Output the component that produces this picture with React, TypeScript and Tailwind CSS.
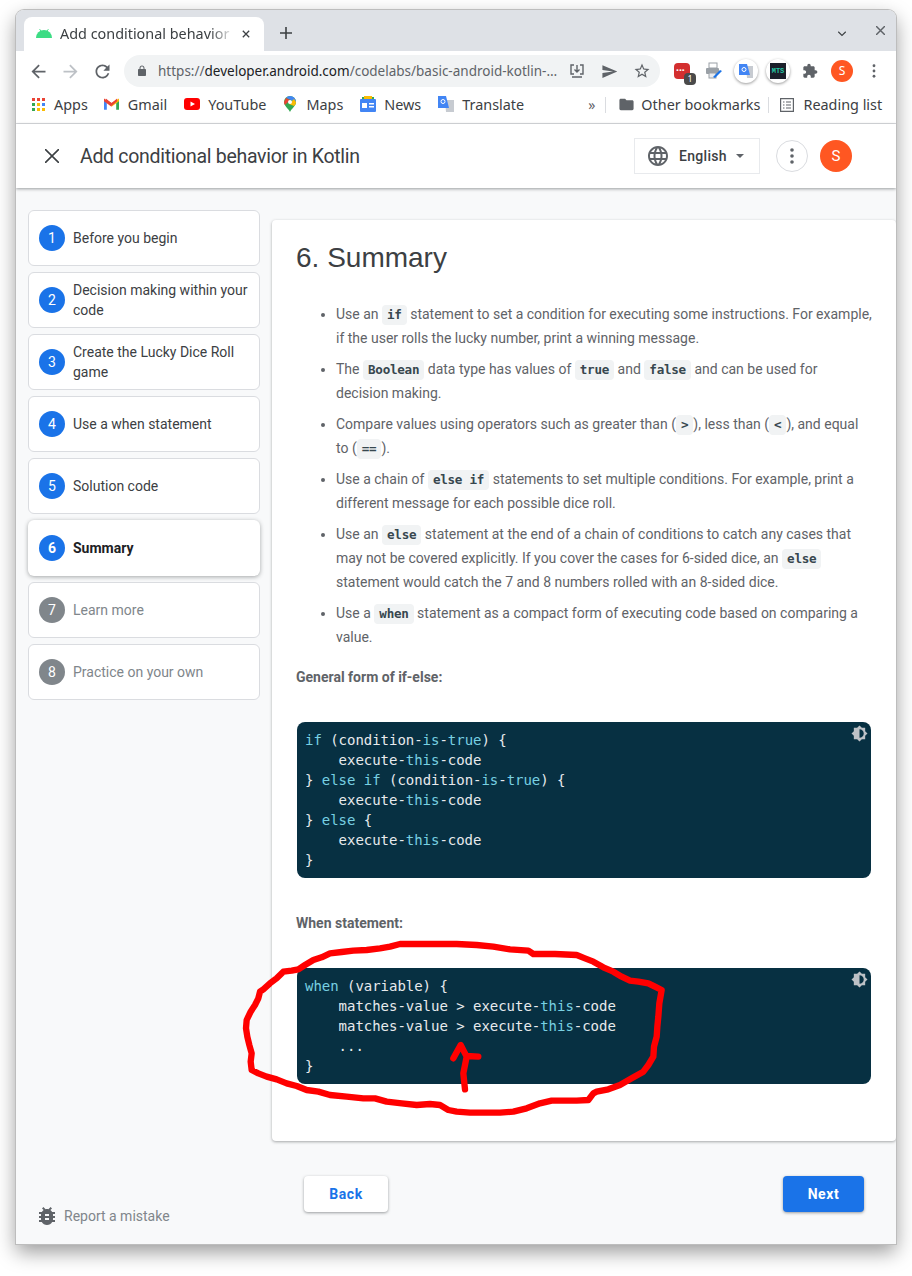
const steps = [
  { n: 1, title: "Before you begin" },
  { n: 2, title: "Decision making within your code" },
  { n: 3, title: "Create the Lucky Dice Roll game" },
  { n: 4, title: "Use a when statement" },
  { n: 5, title: "Solution code" },
  { n: 6, title: "Summary", active: true },
  { n: 7, title: "Learn more", muted: true },
  { n: 8, title: "Practice on your own", muted: true },
];

const monoFont = "font-['DejaVu_Sans_Mono','Liberation_Mono',monospace]";

function Mat({ d, className = "" }: { d: string; className?: string }) {
  return (
    <svg viewBox="0 0 24 24" className={`shrink-0 fill-current ${className}`}>
      <path d={d} />
    </svg>
  );
}

function C({ children }: { children: string }) {
  return (
    <code className={`${monoFont} inline-block h-5 rounded bg-[#f1f3f4] px-[5px] text-[12.6px] font-bold leading-5 tracking-[-0.02em] text-[#37474f]`}>
      {children}
    </code>
  );
}

function K({ children }: { children: string }) {
  return <span className="text-[#78d0e2]">{children}</span>;
}

function CodeBlock({ children }: { children: React.ReactNode }) {
  return (
    <div className="relative rounded-lg bg-[#073042] p-2">
      <pre className={`${monoFont} text-[14px] leading-5 tracking-[-0.03px] text-[#e8eaed]`}>{children}</pre>
      <Mat
        className="absolute right-[3px] top-[3px] h-[17px] w-[17px] text-[#bdc1c6]"
        d="M20 15.31L23.31 12 20 8.69V4h-4.69L12 .69 8.69 4H4v4.69L.69 12 4 15.31V20h4.69L12 23.31 15.31 20H20v-4.69zM12 18V6c3.31 0 6 2.69 6 6s-2.69 6-6 6z"
      />
    </div>
  );
}

function Bookmark({ icon, label, className = "" }: { icon: React.ReactNode; label: string; className?: string }) {
  return (
    <div className={`flex items-center ${className}`}>
      <span className="flex w-4 justify-center">{icon}</span>
      <span className="ml-2 text-[14.4px] text-[#3c4043]">{label}</span>
    </div>
  );
}

function TabStrip() {
  return (
    <div className="flex h-[41px] items-end bg-[#dee1e6]">
      <div className="ml-2 flex h-[34px] w-[240px] items-center rounded-t-lg bg-white pb-[1px] pl-3">
        <svg viewBox="0 0 18 10" className="h-[9px] w-4">
          <path d="M0 10a9 9 0 0 1 18 0z" fill="#3ddc84" />
          <path d="M4 0l2 3M14 0l-2 3" stroke="#3ddc84" strokeWidth="1" />
        </svg>
        <div className="ml-[8px] w-[175px] overflow-hidden whitespace-nowrap font-['Noto_Sans',sans-serif] text-[14.4px] text-[#3c4043] [mask-image:linear-gradient(to_right,black_150px,transparent_174px)]">
          Add conditional behavior in Kotlin
        </div>
        <svg viewBox="0 0 10 10" className="ml-[7px] h-2 w-2 stroke-[#3c4043] stroke-[1.6]">
          <path d="M1 1l8 8M9 1l-8 8" />
        </svg>
      </div>
      <svg viewBox="0 0 12 12" className="mb-[12px] ml-4 h-3 w-3 stroke-[#3c4043] stroke-[1.6]">
        <path d="M6 0v12M0 6h12" />
      </svg>
      <svg viewBox="0 0 12 8" className="mb-[14px] ml-[545px] h-[6px] w-[10px] fill-none stroke-[#3c4043] stroke-[1.5]">
        <path d="M1 1l5 5 5-5" />
      </svg>
      <svg viewBox="0 0 10 10" className="mb-[16px] ml-[29px] h-[9px] w-[9px] stroke-[#5f6368] stroke-[1.6]">
        <path d="M0 0l10 10M10 0L0 10" />
      </svg>
    </div>
  );
}

function Toolbar() {
  return (
    <div className="flex h-[37px] items-center bg-white pl-[12px] pt-[3px]">
      <Mat className="h-[21px] w-[21px] text-[#5f6368]" d="M20 11H7.830l5.590-5.590L12 4l-8 8 8 8 1.410-1.410L7.830 13H20v-2z" />
      <Mat className="ml-[11px] h-[21px] w-[21px] text-[#bdc1c6]" d="M4 11h12.170l-5.590-5.590L12 4l8 8-8 8-1.410-1.410L16.170 13H4v-2z" />
      <Mat className="ml-[11px] h-[21px] w-[21px] text-[#5f6368]" d="M17.650 6.350C16.200 4.900 14.210 4 12 4c-4.420 0-7.990 3.580-7.990 8s3.570 8 7.990 8c3.730 0 6.840-2.550 7.730-6h-2.080c-.82 2.330-3.040 4-5.650 4-3.310 0-6-2.690-6-6s2.690-6 6-6c1.660 0 3.140.69 4.220 1.780L13 11h7V4l-2.350 2.350z" />
      <div className="ml-[11px] flex h-8 w-[536px] items-center rounded-full bg-[#f1f3f4] pl-3">
        <Mat className="h-3 w-3 text-[#5f6368]" d="M18 8h-1V6c0-2.760-2.240-5-5-5S7 3.240 7 6v2H6c-1.100 0-2 .9-2 2v10c0 1.100.9 2 2 2h12c1.100 0 2-.9 2-2V10c0-1.100-.9-2-2-2zM9 6c0-1.660 1.340-3 3-3s3 1.340 3 3v2H9V6z" />
        <div className="ml-[10px] w-[408px] whitespace-nowrap font-['Noto_Sans',sans-serif] text-[13.5px] text-[#5f6368]">
          https://<span className="text-[#202124]">developer.android.com</span>/codelabs/basic-android-kotlin-…
        </div>
        <svg viewBox="0 0 16 16" className="ml-[3px] h-4 w-4 fill-none stroke-[#5f6368] stroke-[1.4]">
          <path d="M5 2H2v9h3M11 2h3v9h-3M3 14h10M8 2v7M5.500 6.500L8 9l2.500-2.500" />
        </svg>
        <Mat className="ml-[16px] h-[17px] w-[17px] text-[#5f6368]" d="M2.010 21L23 12 2.010 3 2 10l15 2-15 2z" />
        <Mat className="ml-[15px] h-[18px] w-[18px] text-[#5f6368]" d="M22 9.240l-7.190-.62L12 2 9.190 8.630 2 9.240l5.460 4.730L5.820 21 12 17.270 18.180 21l-1.630-7.030L22 9.240zM12 15.400l-3.760 2.270 1-4.280-3.320-2.880 4.380-.38L12 6.100l1.710 4.040 4.380.38-3.320 2.880 1 4.280L12 15.400z" />
      </div>
      {/* extensions */}
      <div className="relative ml-[14px] h-4 w-4 rounded-sm bg-[#d32f2f]">
        <span className="absolute left-[2px] top-[6px] text-[8px] font-bold leading-[3px] text-white">•••</span>
        <span className="absolute left-[10px] top-[10px] flex h-3 w-3 items-center justify-center rounded-sm bg-[#4a4a4a] font-['Noto_Sans',sans-serif] text-[9px] text-white">1</span>
      </div>
      <svg viewBox="0 0 18 18" className="ml-[15px] h-[18px] w-[18px]">
        <rect x="4" y="1" width="8" height="5" fill="#fff" stroke="#9aa0a6" />
        <rect x="1" y="6" width="13" height="6" rx="1" fill="#9aa0a6" />
        <rect x="4" y="11" width="7" height="5" fill="#e8eaed" stroke="#9aa0a6" />
        <path d="M8 15l7-7 2 1-7 7z" fill="#1a73e8" />
      </svg>
      <div className="ml-[11px] flex h-6 w-6 items-center justify-center rounded-full bg-white shadow-[0_1px_3px_rgba(0,0,0,0.4)]">
        <svg viewBox="0 0 16 16" className="h-4 w-4">
          <path d="M8 3h7v12H9z" fill="#c7cbd1" />
          <path d="M1 1h8l3 11H1z" fill="#4285f4" />
          <circle cx="6" cy="6.500" r="2" fill="none" stroke="#fff" strokeWidth="1" />
        </svg>
      </div>
      <div className="ml-[8px] flex h-6 w-6 items-center justify-center rounded-full bg-white shadow-[0_1px_3px_rgba(0,0,0,0.4)]">
        <div className="flex h-4 w-4 items-center justify-center bg-[#1b1f2b] font-['Liberation_Mono',monospace] text-[7px] font-bold text-[#26c6a6]">MTS</div>
      </div>
      <Mat className="ml-[12px] h-4 w-4 text-[#5f6368]" d="M20.500 11H19V7c0-1.100-.9-2-2-2h-4V3.500C13 2.120 11.880 1 10.500 1S8 2.120 8 3.500V5H4c-1.100 0-1.990.9-1.990 2v3.800H3.500c1.490 0 2.700 1.210 2.700 2.700s-1.210 2.700-2.700 2.700H2V20c0 1.100.9 2 2 2h3.800v-1.500c0-1.490 1.210-2.700 2.700-2.700 1.490 0 2.700 1.210 2.700 2.700V22H17c1.100 0 2-.9 2-2v-4h1.500c1.380 0 2.500-1.120 2.500-2.500S21.880 11 20.500 11z" />
      <div className="ml-[13px] flex h-[22px] w-[22px] items-center justify-center rounded-full bg-[#ff5722] font-['Noto_Sans',sans-serif] text-[12px] text-white">S</div>
      <svg viewBox="0 0 4 16" className="ml-[19px] h-[14px] w-[4px] fill-[#5f6368]">
        <circle cx="2" cy="2" r="1.600" />
        <circle cx="2" cy="8" r="1.600" />
        <circle cx="2" cy="14" r="1.600" />
      </svg>
    </div>
  );
}

function BookmarksBar() {
  return (
    <div className="flex h-9 items-center border-b border-[#dadce0] bg-white pb-[2px] pl-[14px] font-['Noto_Sans',sans-serif]">
      <Bookmark
        label="Apps"
        icon={
          <svg viewBox="0 0 13 13" className="h-[13px] w-[13px]">
            {[
              [0, 0, "#ea4335"], [5, 0, "#ea4335"], [10, 0, "#ea4335"],
              [0, 5, "#34a853"], [5, 5, "#fbbc04"], [10, 5, "#4285f4"],
              [0, 10, "#34a853"], [5, 10, "#fbbc04"], [10, 10, "#fbbc04"],
            ].map(([x, y, f], i) => (
              <rect key={i} x={x as number} y={y as number} width="3" height="3" fill={f as string} />
            ))}
          </svg>
        }
      />
      <Bookmark
        label="Gmail"
        className="ml-4"
        icon={
          <svg viewBox="0 0 16 12" className="h-3 w-[15px]">
            <path d="M0 2v10h3V5z" fill="#4285f4" />
            <path d="M16 2v10h-3V5z" fill="#34a853" />
            <path d="M0 0v3l8 6V5z" fill="#ea4335" />
            <path d="M16 0v3L8 9V5z" fill="#fbbc04" />
            <path d="M2 0l6 5 6-5v3L8 8 2 3z" fill="#ea4335" />
          </svg>
        }
      />
      <Bookmark
        label="YouTube"
        className="ml-[17px]"
        icon={
          <svg viewBox="0 0 16 12" className="h-3 w-4">
            <rect width="16" height="12" rx="3" fill="#f00" />
            <path d="M6.500 3.500L11 6l-4.500 2.500z" fill="#fff" />
          </svg>
        }
      />
      <Bookmark
        label="Maps"
        className="ml-4"
        icon={
          <svg viewBox="0 0 12 16" className="h-4 w-3">
            <path d="M6 0a6 6 0 0 1 6 6c0 4-4 6-6 10C4 12 0 10 0 6a6 6 0 0 1 6-6z" fill="#34a853" />
            <path d="M6 0a6 6 0 0 1 6 6L2 2a6 6 0 0 1 4-2z" fill="#4285f4" />
            <path d="M2 2L0 6c0 1 .5 2 1 3l5-5z" fill="#ea4335" />
            <path d="M12 6c0 2-1 3-2 4L5 8l5-5z" fill="#fbbc04" />
            <circle cx="6" cy="6" r="2" fill="#fff" />
          </svg>
        }
      />
      <Bookmark
        label="News"
        className="ml-[17px]"
        icon={
          <svg viewBox="0 0 16 16" className="h-4 w-4">
            <path d="M2 1h12v4H2z" fill="#34a853" />
            <path d="M4 0h8v3H4z" fill="#fbbc04" />
            <rect y="3" width="16" height="13" rx="1" fill="#4285f4" />
            <rect x="2" y="7" width="5" height="5" fill="#fff" />
            <path d="M9 7h5v1.500H9zM9 10h5v1.500H9z" fill="#fff" />
          </svg>
        }
      />
      <Bookmark
        label="Translate"
        className="ml-[17px]"
        icon={
          <svg viewBox="0 0 16 16" className="h-4 w-4">
            <path d="M7 4h9v12H8z" fill="#c7cbd1" />
            <path d="M0 0h8l3 12H0z" fill="#4285f4" />
            <circle cx="5" cy="5.500" r="2" fill="none" stroke="#fff" strokeWidth="1" />
          </svg>
        }
      />
      <span className="ml-[64px] text-[14px] leading-none text-[#5f6368]">»</span>
      <span className="ml-[10px] h-4 w-px bg-[#dadce0]" />
      <Mat className="ml-[12px] h-[17px] w-[17px] text-[#5f6368]" d="M10 4H4c-1.100 0-1.990.9-1.990 2L2 18c0 1.100.9 2 2 2h16c1.100 0 2-.9 2-2V8c0-1.100-.9-2-2-2h-8l-2-2z" />
      <span className="ml-1.5 text-[14.4px] text-[#3c4043]">Other bookmarks</span>
      <span className="ml-2 h-4 w-px bg-[#dadce0]" />
      <svg viewBox="0 0 14 14" className="ml-[11px] h-[14px] w-[14px] fill-none stroke-[#5f6368] stroke-[1.2]">
        <path d="M.6.6h12.800v12.800H.6zM3 4h1.500M6 4h5M3 7h1.500M6 7h5M3 10h1.500M6 10h5" />
      </svg>
      <span className="ml-[9px] text-[14.4px] text-[#3c4043]">Reading list</span>
    </div>
  );
}

function Header() {
  return (
    <div className="relative z-10 flex h-16 items-center bg-white pl-[29px] shadow-[0_1px_3px_rgba(60,64,67,0.5)]">
      <svg viewBox="0 0 14 14" className="h-[14px] w-[14px] stroke-[#3c4043] stroke-[1.6]">
        <path d="M0 0l14 14M14 0L0 14" />
      </svg>
      <h1 className="ml-[21px] w-[554px] pt-px text-[19.5px] tracking-[-0.3px] text-[#3c4043]">Add conditional behavior in Kotlin</h1>
      <div className="flex h-9 w-[126px] items-center border border-[#e8eaed] pl-[11px]">
        <Mat
          className="h-6 w-6 text-[#5f6368]"
          d="M11.990 2C6.470 2 2 6.480 2 12s4.470 10 9.990 10C17.520 22 22 17.520 22 12S17.520 2 11.990 2zm6.930 6h-2.950c-.32-1.250-.78-2.450-1.380-3.560 1.840.63 3.370 1.910 4.330 3.560zM12 4.040c.83 1.200 1.480 2.530 1.910 3.960h-3.820c.43-1.430 1.080-2.760 1.910-3.960zM4.260 14C4.100 13.360 4 12.690 4 12s.1-1.360.26-2h3.380c-.08.66-.14 1.320-.14 2 0 .68.06 1.340.14 2H4.260zm.82 2h2.950c.32 1.250.78 2.450 1.380 3.560-1.840-.63-3.370-1.900-4.330-3.560zm2.950-8H5.080c.96-1.660 2.490-2.930 4.330-3.560C8.810 5.550 8.350 6.750 8.030 8zM12 19.960c-.83-1.200-1.480-2.530-1.910-3.960h3.820c-.43 1.430-1.080 2.760-1.910 3.960zM14.340 14H9.660c-.09-.66-.16-1.320-.16-2 0-.68.07-1.350.16-2h4.680c.09.65.16 1.320.16 2 0 .68-.07 1.340-.16 2zm.25 5.560c.6-1.110 1.060-2.310 1.380-3.560h2.950c-.96 1.650-2.490 2.930-4.330 3.560zM16.360 14c.08-.66.14-1.320.14-2 0-.68-.06-1.340-.14-2h3.380c.16.64.26 1.310.26 2s-.1 1.360-.26 2h-3.380z"
        />
        <span className="ml-[9px] text-[14px] font-medium tracking-[0.3px] text-[#3c4043]">English</span>
        <svg viewBox="0 0 8 4" className="ml-[9px] h-1 w-2 fill-[#5f6368]">
          <path d="M0 0h8L4 4z" />
        </svg>
      </div>
      <div className="ml-4 flex h-8 w-8 items-center justify-center rounded-full border border-[#dadce0]">
        <svg viewBox="0 0 4 16" className="h-4 w-1 fill-[#5f6368]">
          <circle cx="2" cy="2" r="1.800" />
          <circle cx="2" cy="8" r="1.800" />
          <circle cx="2" cy="14" r="1.800" />
        </svg>
      </div>
      <div className="ml-3 flex h-8 w-8 items-center justify-center rounded-full bg-[#ff5722] text-[15px] text-white">S</div>
    </div>
  );
}

function Sidebar() {
  return (
    <aside className="flex w-[256px] shrink-0 flex-col pb-[16px] pl-3 pt-[22px]">
      <ol className="flex w-[232px] flex-col gap-1.5">
        {steps.map((s) => (
          <li
            key={s.n}
            className={`flex h-14 items-center rounded-md border bg-white pl-[10px] pr-2 text-[14px] leading-5 ${
              s.active
                ? "border-transparent font-bold text-[#202124] shadow-[0_1px_4px_rgba(60,64,67,0.45)]"
                : s.muted
                  ? "border-[#dadce0] text-[#80868b]"
                  : "border-[#dadce0] text-[#3c4043]"
            }`}
          >
            <span
              className={`mr-2 flex h-[26px] w-[26px] shrink-0 items-center justify-center rounded-full text-white ${
                s.muted ? "bg-[#80868b]" : "bg-[#1a73e8]"
              }`}
            >
              {s.n}
            </span>
            <span>{s.title}</span>
          </li>
        ))}
      </ol>
      <div className="mt-auto flex items-center pl-[7px] text-[14px] text-[#80868b]">
        <Mat
          className="mr-[5px] h-6 w-6 text-[#5f6368]"
          d="M20 8h-2.810c-.45-.78-1.070-1.450-1.820-1.960L17 4.410 15.590 3l-2.170 2.170C12.960 5.060 12.490 5 12 5c-.49 0-.96.06-1.410.17L8.410 3 7 4.410l1.620 1.630C7.880 6.550 7.260 7.220 6.810 8H4v2h2.090c-.05.33-.09.66-.09 1v1H4v2h2v1c0 .34.04.67.09 1H4v2h2.810c1.040 1.790 2.970 3 5.190 3s4.150-1.210 5.190-3H20v-2h-2.090c.05-.33.09-.66.09-1v-1h2v-2h-2v-1c0-.34-.04-.67-.09-1H20V8zm-6 8h-4v-2h4v2zm0-4h-4v-2h4v2z"
        />
        Report a mistake
      </div>
    </aside>
  );
}

function Content() {
  return (
    <div className="relative rounded bg-white pb-[57px] pl-6 pr-6 pt-[18px] shadow-[0_1px_3px_rgba(60,64,67,0.45)]">
      <h2 className="font-['Liberation_Sans',sans-serif] text-[28px] leading-10 text-[#3c4043]">6. Summary</h2>
      <ul className="mt-[24px] flex list-disc flex-col gap-[7px] pl-10 text-[14px] leading-6 text-[#5f6368]">
        <li>
          Use an <C>if</C> statement to set a condition for executing some instructions. For example, if the user rolls the lucky number, print a winning message.
        </li>
        <li>
          The <C>Boolean</C> data type has values of <C>true</C> and <C>false</C> and can be used for decision making.
        </li>
        <li>
          Compare values using operators such as greater than (<C>&gt;</C>), less than (<C>&lt;</C>), and equal to (<C>==</C>).
        </li>
        <li>
          Use a chain of <C>else if</C> statements to set multiple conditions. For example, print a different message for each possible dice roll.
        </li>
        <li>
          Use an <C>else</C> statement at the end of a chain of conditions to catch any cases that may not be covered explicitly. If you cover the cases for 6-sided dice, an <C>else</C> statement would catch the 7 and 8 numbers rolled with an 8-sided dice.
        </li>
        <li>
          Use a <C>when</C> statement as a compact form of executing code based on comparing a value.
        </li>
      </ul>
      <p className="mt-4 text-[14px] font-bold leading-6 text-[#5f6368]">General form of if-else:</p>
      <div className="mx-px mt-[33px]">
        <CodeBlock>
          <K>if</K> (condition-<K>is</K>-<K>true</K>) {"{\n"}
          {"    "}execute-<K>this</K>-code{"\n"}
          {"} "}<K>else</K> <K>if</K> (condition-<K>is</K>-<K>true</K>) {"{\n"}
          {"    "}execute-<K>this</K>-code{"\n"}
          {"} "}<K>else</K> {"{\n"}
          {"    "}execute-<K>this</K>-code{"\n"}
          {"}"}
        </CodeBlock>
      </div>
      <p className="mt-[33px] text-[14px] font-bold leading-6 text-[#5f6368]">When statement:</p>
      <div className="mx-px mt-[33px]">
        <CodeBlock>
          <K>when</K> (variable) {"{\n"}
          {"    "}matches-value &gt; execute-<K>this</K>-code{"\n"}
          {"    "}matches-value &gt; execute-<K>this</K>-code{"\n"}
          {"    ...\n"}
          {"}"}
        </CodeBlock>
      </div>
      {/* hand-drawn annotation sitting on top of the second block */}
      <svg viewBox="0 0 1350 570" className="pointer-events-none absolute left-[-42px] top-[710px] h-[190px] w-[450px] fill-none stroke-[#ff0000] stroke-[19]" strokeLinejoin="round" strokeLinecap="round">
        <path d="M205 118L185 122L160 125L140 145L120 160L100 178L90 185L85 205L75 225L62 245L50 270L48 295L52 320L58 345L65 370L62 395L65 420L85 430L110 440L140 448L170 460L200 468L230 480L265 485L300 495L350 500L400 505L435 505L470 515L515 520L560 525L600 522L630 525L655 540L680 545L720 548L760 548L810 548L850 545L890 535L930 520L965 512L1000 512L1040 512L1075 510L1090 490L1100 485L1135 478L1170 465L1205 445L1240 425L1255 405L1270 380L1272 350L1280 320L1282 290L1285 260L1288 220L1295 180L1275 170L1255 160L1225 155L1200 152L1175 140L1150 125L1120 112L1090 95L1065 85L1040 75L975 72L910 72L895 62L840 58L790 50L740 45L680 42L620 42L565 42L510 42L480 50L450 55L410 60L370 62L335 66L300 70L275 82L250 90L225 105Z" />
        <path d="M705 478L700 430L710 380L692 345L670 385M710 378L745 380" />
      </svg>
    </div>
  );
}

export default function App() {
  return (
    <div className="h-[1276px] w-[912px] overflow-hidden bg-white pl-4 pt-[10px] font-['Roboto',sans-serif]">
      <div className="flex h-[1234px] w-[880px] flex-col overflow-hidden rounded-t-lg bg-[#f8f9fa] shadow-[0_0_0_1px_#bdbdbd,0_8px_20px_rgba(0,0,0,0.4)]">
        <TabStrip />
        <Toolbar />
        <BookmarksBar />
        <Header />
        <div className="flex min-h-0 flex-1">
          <Sidebar />
          <main className="flex-1 pt-8">
            <Content />
            <div className="mt-[35px] flex justify-between pl-8 pr-8">
              <button className="h-9 w-[84px] rounded bg-white text-[14px] font-bold tracking-[0.6px] text-[#1a73e8] shadow-[0_1px_3px_rgba(60,64,67,0.5)]">Back</button>
              <button className="h-9 w-[81px] rounded bg-[#1a73e8] text-[14px] font-bold tracking-[0.6px] text-white shadow-[0_1px_3px_rgba(60,64,67,0.5)]">Next</button>
            </div>
          </main>
        </div>
      </div>
    </div>
  );
}
